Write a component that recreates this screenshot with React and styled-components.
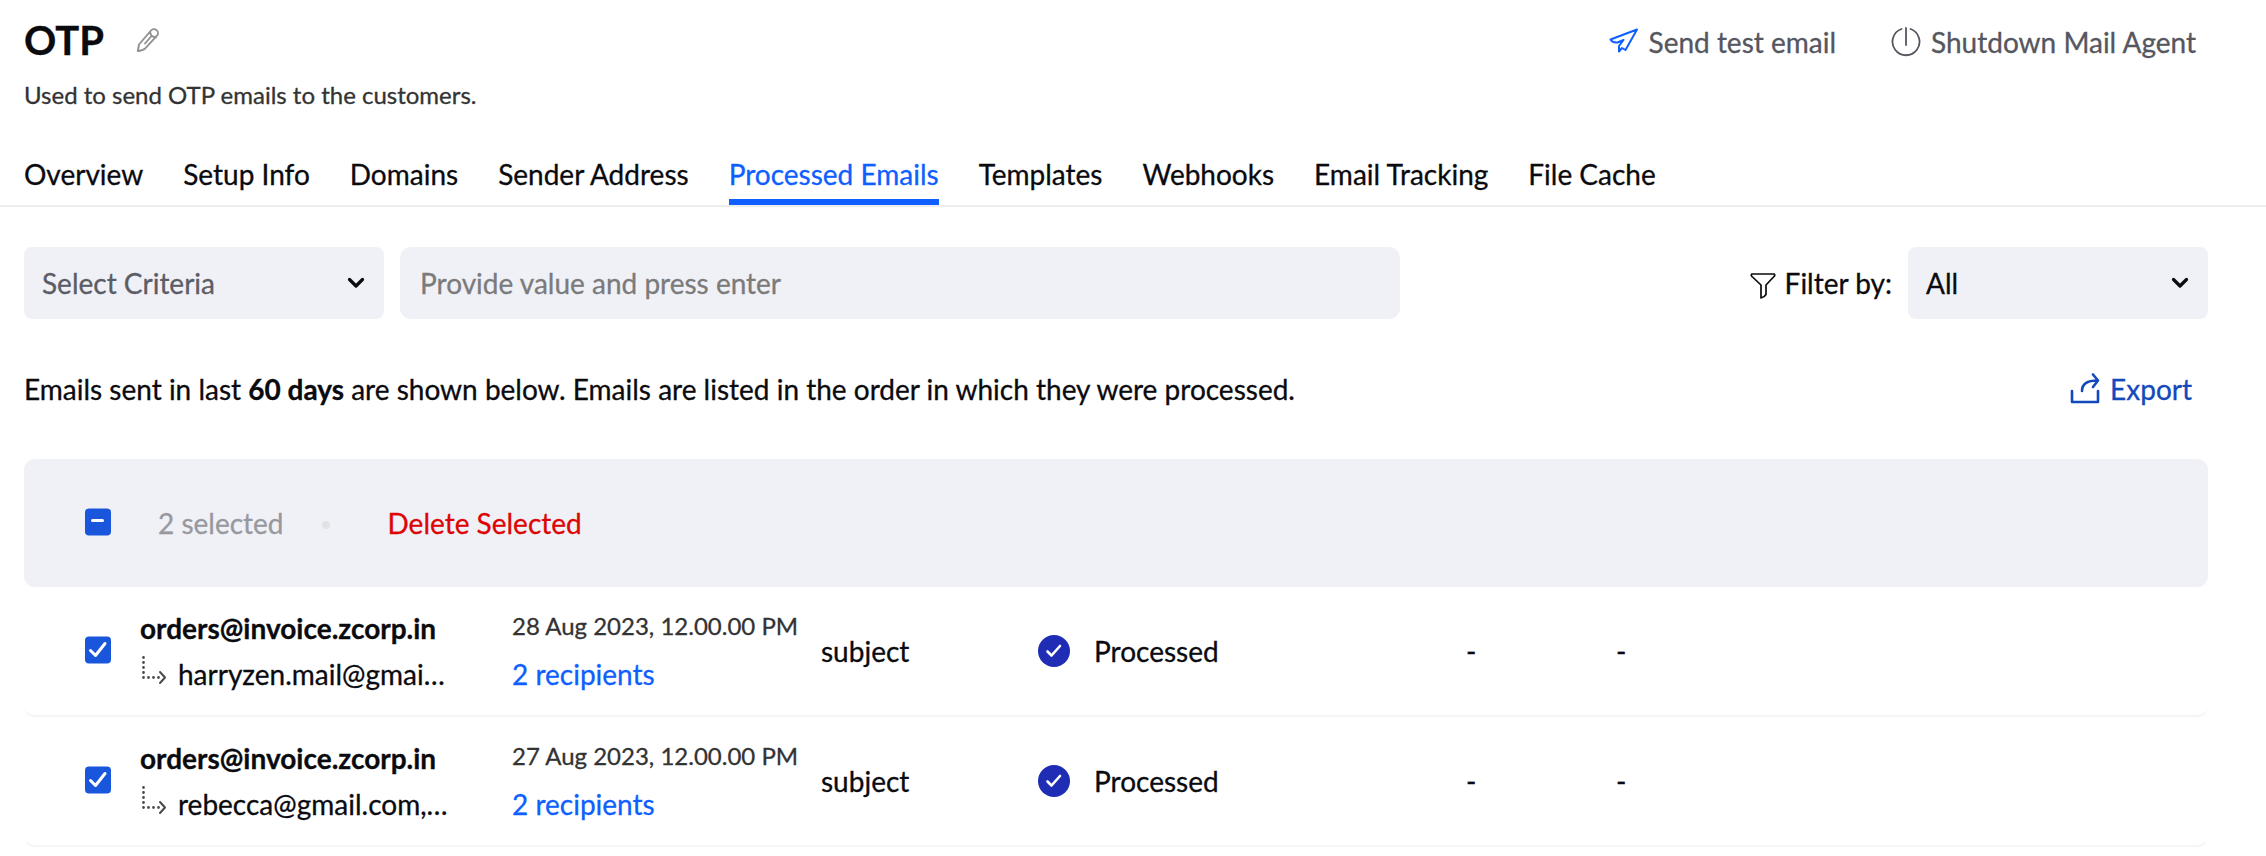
import React from "react";
import styled, { createGlobalStyle } from "styled-components";

const GlobalStyle = createGlobalStyle`
  * { box-sizing: border-box; }
  body {
    margin: 0;
    background: #fff;
    color: #0b0b0f;
    font-family: Lato, "Liberation Sans", sans-serif;
    font-size: 28px;
    line-height: 34px;
    -webkit-text-stroke: 0.3px currentColor;
  }
`;

const Page = styled.main`
  height: 856px;
  overflow: hidden;
  display: flex;
  flex-direction: column;
`;

const Header = styled.header`
  height: 138px;
  padding: 16px 70px 0 24px;
  display: flex;
  justify-content: space-between;
`;

const TitleRow = styled.div`
  display: flex;
  align-items: center;
  gap: 32px;
  height: 48px;
`;

const Title = styled.h1`
  margin: 0;
  font-size: 40px;
  line-height: 48px;
  font-weight: 700;
`;

const Description = styled.p`
  margin: 16px 0 0;
  font-size: 24px;
  line-height: 29px;
  color: #333;
`;

const Actions = styled.div`
  display: flex;
  gap: 55px;
  height: 52px;
  align-items: center;
`;

const Action = styled.div`
  display: flex;
  align-items: center;
  gap: 10px;
  color: #55565e;
`;

const Tabs = styled.nav`
  display: flex;
  gap: 40px;
  height: 69px;
  padding: 0 24px;
  border-bottom: 2px solid #ededed;
`;

const Tab = styled.div`
  height: 67px;
  padding-top: 19px;
  white-space: nowrap;
  color: ${(p) => (p.$active ? "#0f5fff" : "inherit")};
  border-bottom: ${(p) => (p.$active ? "6px solid #0f5fff" : "0")};
`;

const Content = styled.section`
  padding: 40px 58px 0 24px;
`;

const Filters = styled.div`
  display: flex;
  align-items: center;
  height: 72px;
`;

const Select = styled.div`
  width: ${(p) => p.$width}px;
  height: 72px;
  padding: 0 18px;
  border-radius: 8px;
  background: #f0f1f7;
  color: ${(p) => p.$color || "inherit"};
  display: flex;
  align-items: center;
  justify-content: space-between;
`;

const SearchBox = styled.div`
  width: 1000px;
  height: 72px;
  margin-left: 16px;
  padding: 0 20px;
  border-radius: 11px;
  background: #f0f1f7;
  color: #7b7b7b;
  display: flex;
  align-items: center;
`;

const FilterLabel = styled.div`
  margin: 0 16px 0 auto;
  display: flex;
  align-items: center;
  gap: 9px;
`;

const Notice = styled.div`
  height: 140px;
  padding: 0 16px 0 0;
  display: flex;
  align-items: center;
  justify-content: space-between;
`;

const ExportLink = styled.a`
  display: flex;
  align-items: center;
  gap: 10px;
  color: #1349bb;
`;

const SelectionBar = styled.div`
  height: 128px;
  padding-left: 60px;
  border-radius: 11px;
  background: #f0f1f7;
  display: flex;
  align-items: center;
`;

const SelectedCount = styled.span`
  margin-left: 46px;
  color: #98999f;
`;

const Dot = styled.span`
  width: 8px;
  height: 8px;
  margin: 4px 58px 0 38px;
  border-radius: 50%;
  background: #e2e2e5;
`;

const DeleteLink = styled.a`
  color: #dc0505;
`;

const Row = styled.div`
  display: grid;
  grid-template-columns: 56px 372px 309px 217px 428px 150px 1fr;
  height: 130px;
  padding-left: 60px;
  border-bottom: 2px solid #f4f4f9;
  border-radius: 11px;
  align-items: center;
`;

const Stack = styled.div`
  display: flex;
  flex-direction: column;
  justify-content: space-between;
  height: 82px;
  margin-bottom: 2px;
  white-space: nowrap;
`;

const Sender = styled.div`
  margin-top: 2px;
  font-weight: 700;
`;

const Recipient = styled.div`
  display: flex;
  gap: 11px;
`;

const DateText = styled.div`
  color: #333;
  font-size: 24px;
  line-height: 34px;
`;

const Link = styled.a`
  color: #0f5fff;
`;

const Cell = styled.div`
  display: flex;
  align-items: center;
  gap: 24px;
`;

const Svg = styled.svg`
  display: block;
  flex: none;
  fill: none;
  stroke: currentColor;
  stroke-linecap: round;
  stroke-linejoin: round;
`;

const PencilSvg = styled(Svg)`
  color: #929292;
`;

const PencilIcon = () => (
  <PencilSvg width="24" height="26" viewBox="0 0 24 26" strokeWidth="1.9">
    <path d="M1.800 24l1.200-6.500L15 3.500a3.900 3.900 0 0 1 6 5.200L8.800 21.800q-2 1.800-7 2.200zM14 5l1.500 4 4.500 1.500M15.500 9L9 16.500" />
  </PencilSvg>
);

const SendSvg = styled(Svg)`
  margin-bottom: 3px;
  color: #0f5fff;
`;

const SendIcon = () => (
  <SendSvg width="30" height="26" viewBox="0 0 30 26" strokeWidth="2">
    <path d="M28 1.500L1.500 11.500q2 3.500 7 3L14.500 12l-4.500 6v5.500l3-3.500 3.500 2z" />
  </SendSvg>
);

const PowerIcon = () => (
  <Svg width="30" height="30" viewBox="0 0 30 30" strokeWidth="1.8">
    <path d="M15 1v17M10.500 2a13.500 13.500 0 1 0 9 0" />
  </Svg>
);

const ChevronSvg = styled(Svg)`
  color: #0b0b0f;
`;

const ChevronIcon = () => (
  <ChevronSvg width="20" height="14" viewBox="0 0 20 14" strokeWidth="3.200">
    <path d="M3.500 3.500L10 10l6.500-6.500" />
  </ChevronSvg>
);

const FunnelSvg = styled(Svg)`
  margin-top: 5px;
`;

const FunnelIcon = () => (
  <FunnelSvg width="26" height="28" viewBox="0 0 26 28" strokeWidth="1.700">
    <path d="M2 2h22q1.500 1 0 2.500L16 13v9.500q-1.500 2.500-5 3.500V13L2 4.500Q.5 3 2 2z" />
  </FunnelSvg>
);

const ExportIcon = () => (
  <Svg width="30" height="32" viewBox="0 0 30 32" strokeWidth="2.600">
    <path d="M2 18v11h26V18M12 18c0-7 5-10.500 15.500-10.500M23 1.500l5 6-5 6.500" />
  </Svg>
);

const BoxSvg = styled(Svg)`
  margin-top: -2px;
  color: #fff;
`;

const Checkbox = ({ partial }) => (
  <BoxSvg width="28" height="28" viewBox="0 0 28 28" strokeWidth="3">
    <rect x="1" y="0.500" width="26" height="27" rx="4" fill="#1a56db" stroke="none" />
    <path d={partial ? "M8.500 12.500h10" : "M6.500 14.500l5 5 9.500-12"} />
  </BoxSvg>
);

const ReplySvg = styled(Svg)`
  margin-top: -2px;
  color: #4a4a4a;
`;

const ReplyIcon = () => (
  <ReplySvg width="27" height="30" viewBox="0 0 27 30">
    <path d="M3.500 2.500v20H19" strokeWidth="2.800" strokeDasharray="0 5" />
    <path d="M20 17l5 5.500-5 5.500" strokeWidth="2" />
  </ReplySvg>
);

const ProcessedIcon = () => (
  <Svg width="32" height="32" viewBox="0 0 32 32">
    <circle cx="16" cy="16" r="16" fill="#1f2db5" stroke="none" />
    <path d="M9.500 16.500l4 4 8.500-9.500" stroke="#fff" strokeWidth="2.600" />
  </Svg>
);

const tabs = [
  "Overview",
  "Setup Info",
  "Domains",
  "Sender Address",
  "Processed Emails",
  "Templates",
  "Webhooks",
  "Email Tracking",
  "File Cache",
];

const emails = [
  { to: "harryzen.mail@gmai…", date: "28 Aug 2023, 12.00.00 PM" },
  { to: "rebecca@gmail.com,…", date: "27 Aug 2023, 12.00.00 PM" },
];

export default function App() {
  return (
    <Page>
      <GlobalStyle />
      <Header>
        <div>
          <TitleRow>
            <Title>OTP</Title>
            <PencilIcon />
          </TitleRow>
          <Description>Used to send OTP emails to the customers.</Description>
        </div>
        <Actions>
          <Action>
            <SendIcon />
            Send test email
          </Action>
          <Action>
            <PowerIcon />
            Shutdown Mail Agent
          </Action>
        </Actions>
      </Header>
      <Tabs>
        {tabs.map((t) => (
          <Tab key={t} $active={t === "Processed Emails"}>
            {t}
          </Tab>
        ))}
      </Tabs>
      <Content>
        <Filters>
          <Select $width={360} $color="#5c5d64">
            Select Criteria
            <ChevronIcon />
          </Select>
          <SearchBox>Provide value and press enter</SearchBox>
          <FilterLabel>
            <FunnelIcon />
            Filter by:
          </FilterLabel>
          <Select $width={300}>
            All
            <ChevronIcon />
          </Select>
        </Filters>
        <Notice>
          <span>
            Emails sent in last <b>60 days</b> are shown below. Emails are listed in the order in
            which they were processed.
          </span>
          <ExportLink>
            <ExportIcon />
            Export
          </ExportLink>
        </Notice>
        <SelectionBar>
          <Checkbox partial />
          <SelectedCount>2 selected</SelectedCount>
          <Dot />
          <DeleteLink>Delete Selected</DeleteLink>
        </SelectionBar>
        {emails.map((e) => (
          <Row key={e.date}>
            <Checkbox />
            <Stack>
              <Sender>orders@invoice.zcorp.in</Sender>
              <Recipient>
                <ReplyIcon />
                {e.to}
              </Recipient>
            </Stack>
            <Stack>
              <DateText>{e.date}</DateText>
              <Link>2 recipients</Link>
            </Stack>
            <Cell>subject</Cell>
            <Cell>
              <ProcessedIcon />
              Processed
            </Cell>
            <Cell>-</Cell>
            <Cell>-</Cell>
          </Row>
        ))}
      </Content>
    </Page>
  );
}
